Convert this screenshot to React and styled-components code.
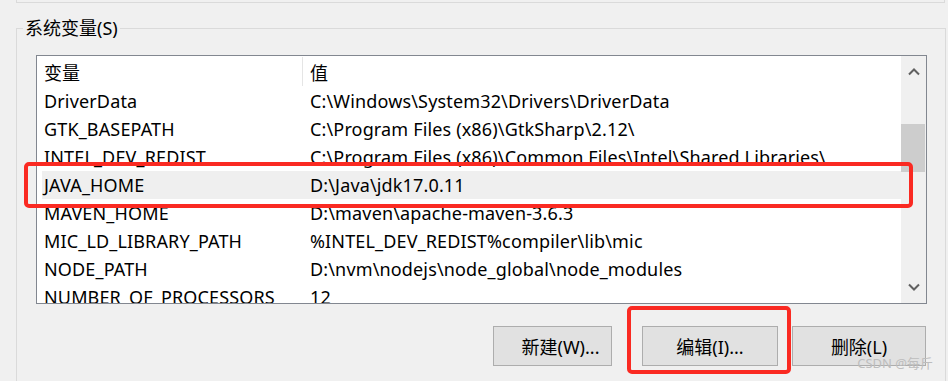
import React from "react";
import styled, { createGlobalStyle } from "styled-components";

const GlobalStyle = createGlobalStyle`
  html, body {
    margin: 0;
    padding: 0;
    background: #f0f0f0;
  }
  body {
    font-family: "Noto Sans", "Noto Sans CJK SC", sans-serif;
    color: #000;
  }
`;

const Page = styled.div`
  position: relative;
  width: 948px;
  height: 381px;
  overflow: hidden;
  background: #f0f0f0;
`;

const PrevGroup = styled.div`
  height: 2px;
  margin: 0 3px 0 16px;
  border: 1px solid #dadada;
  border-top: none;
`;

const Group = styled.fieldset`
  margin: 13px 2px 0 16px;
  padding: 0;
  min-width: 0;
  height: 400px;
  border: 1px solid #dadada;
  border-bottom: none;
`;

const Legend = styled.legend`
  margin-left: 6px;
  padding: 0 2px;
  font-size: 18px;
  line-height: 24px;
`;

const ListBox = styled.div`
  display: flex;
  box-sizing: border-box;
  width: 891px;
  height: 249px;
  margin: 15px 0 0 19px;
  border: 1px solid #828790;
  background: #fff;
`;

const ListArea = styled.div`
  flex: 1;
  padding-left: 5px;
  overflow: hidden;
`;

const HeaderRow = styled.div`
  display: grid;
  grid-template-columns: 261px 1fr;
  height: 31px;
  align-items: center;
  font-size: 18px;
`;

const HeaderCell = styled.div`
  box-sizing: border-box;
  height: 29px;
  display: flex;
  align-items: center;
  padding-left: ${(p) => (p.$first ? "2px" : "7px")};
  border-right: ${(p) => (p.$first ? "1px solid #e5e5e5" : "none")};
`;

const Row = styled.div`
  display: grid;
  grid-template-columns: 261px 1fr;
  height: 28px;
  align-items: center;
  font-size: 18px;
  letter-spacing: 0.15px;
  white-space: nowrap;
  background: ${(p) => (p.$selected ? "#efefef" : "transparent")};
`;

const Cell = styled.div`
  padding-left: ${(p) => (p.$first ? "2px" : "7px")};
  overflow: hidden;
`;

const ScrollBar = styled.div`
  display: flex;
  flex-direction: column;
  width: 25px;
  background: #f0f0f0;
`;

const ArrowBtn = styled.div`
  display: flex;
  align-items: center;
  justify-content: center;
  height: 32px;
`;

const Track = styled.div`
  flex: 1;
`;

const Thumb = styled.div`
  width: 24px;
  height: 48px;
  margin-top: 36px;
  background: #cdcdcd;
`;

const ButtonRow = styled.div`
  display: flex;
  justify-content: flex-end;
  margin-top: 22px;
  padding-right: 19px;
`;

const Button = styled.button`
  box-sizing: border-box;
  width: ${(p) => p.$w}px;
  height: 40px;
  margin-left: ${(p) => p.$gap || 0}px;
  padding: 0 0 0 ${(p) => p.$indent || 0}px;
  border: 1px solid #adadad;
  background: #e1e1e1;
  font-family: inherit;
  font-size: 18px;
  color: #000;
`;

const Mark = styled.div`
  position: absolute;
  box-sizing: border-box;
  left: ${(p) => p.$x}px;
  top: ${(p) => p.$y}px;
  width: ${(p) => p.$w}px;
  height: ${(p) => p.$h}px;
  border: 4px solid #fa2a22;
  border-radius: 5px;
`;

const Watermark = styled.div`
  position: absolute;
  right: 15px;
  bottom: 9px;
  font-size: 13px;
  color: #bdbdbd;
`;

const Chevron = ({ down }) => (
  <svg width="12" height="8" viewBox="0 0 12 8">
    <polyline
      points={down ? "1,1.5 6,6.5 11,1.5" : "1,6.5 6,1.5 11,6.5"}
      fill="none"
      stroke="#606060"
      strokeWidth="2"
    />
  </svg>
);

const vars = [
  ["DriverData", "C:\\Windows\\System32\\Drivers\\DriverData"],
  ["GTK_BASEPATH", "C:\\Program Files (x86)\\GtkSharp\\2.12\\"],
  ["INTEL_DEV_REDIST", "C:\\Program Files (x86)\\Common Files\\Intel\\Shared Libraries\\"],
  ["JAVA_HOME", "D:\\Java\\jdk17.0.11"],
  ["MAVEN_HOME", "D:\\maven\\apache-maven-3.6.3"],
  ["MIC_LD_LIBRARY_PATH", "%INTEL_DEV_REDIST%compiler\\lib\\mic"],
  ["NODE_PATH", "D:\\nvm\\nodejs\\node_global\\node_modules"],
  ["NUMBER_OF_PROCESSORS", "12"],
];

export default function App() {
  return (
    <Page>
      <GlobalStyle />
      <PrevGroup />
      <Group>
        <Legend>系统变量(S)</Legend>
        <ListBox>
          <ListArea>
            <HeaderRow>
              <HeaderCell $first>变量</HeaderCell>
              <HeaderCell>值</HeaderCell>
            </HeaderRow>
            {vars.map(([name, value]) => (
              <Row key={name} $selected={name === "JAVA_HOME"}>
                <Cell $first>{name}</Cell>
                <Cell>{value}</Cell>
              </Row>
            ))}
          </ListArea>
          <ScrollBar>
            <ArrowBtn>
              <Chevron />
            </ArrowBtn>
            <Track>
              <Thumb />
            </Track>
            <ArrowBtn>
              <Chevron down />
            </ArrowBtn>
          </ScrollBar>
        </ListBox>
        <ButtonRow>
          <Button $w={119} $indent={16}>新建(W)...</Button>
          <Button $w={136} $gap={30}>编辑(I)...</Button>
          <Button $w={134} $gap={14}>删除(L)</Button>
        </ButtonRow>
      </Group>
      <Mark $x={24} $y={162} $w={889} $h={46} />
      <Mark $x={627} $y={306} $w={164} $h={68} />
      <Watermark>CSDN @每斤</Watermark>
    </Page>
  );
}
